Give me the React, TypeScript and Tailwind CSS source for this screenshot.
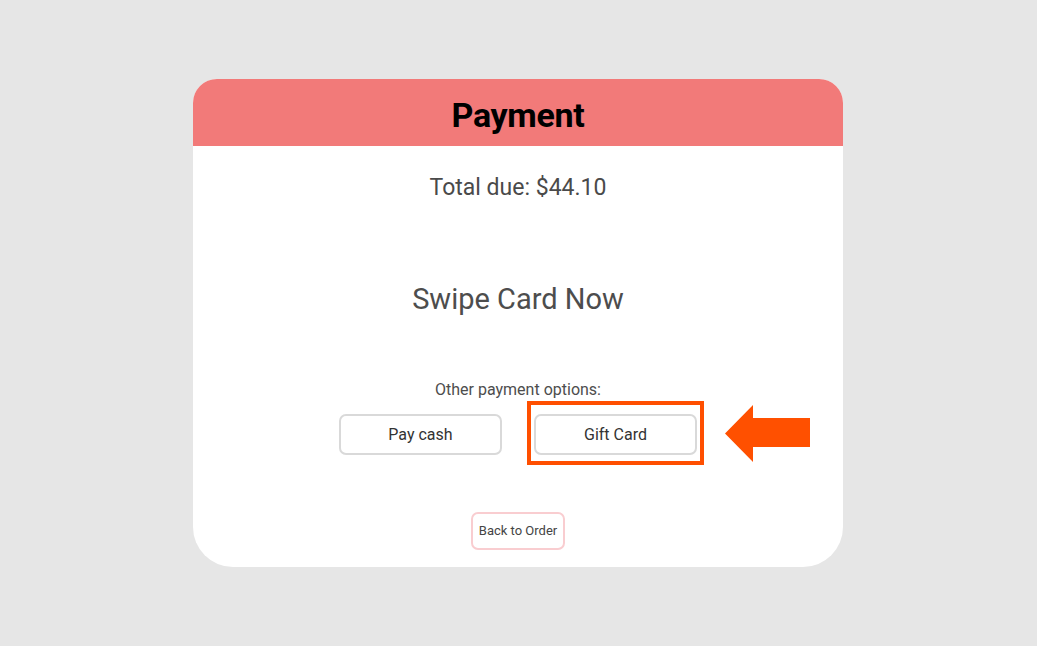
import { useState } from 'react';

const font = { fontFamily: 'Roboto, "Noto Sans", sans-serif' };

export default function App() {
  const [method, setMethod] = useState<'card' | 'cash' | 'gift'>('card');

  return (
    <div
      className="min-h-screen w-full bg-[#e6e6e6] flex items-center justify-center pr-px"
      style={font}
    >
      <div className="w-[650px] h-[488px] bg-white rounded-t-[24px] rounded-b-[40px] overflow-hidden flex flex-col items-center">
        {/* Header */}
        <div className="w-full h-[67px] pt-[5px] bg-[#f27a79] flex items-center justify-center">
          <h1 className="text-[34px] font-bold text-black tracking-[-0.3px]">Payment</h1>
        </div>

        <p className="mt-[27px] text-[23px] leading-[30px] text-[#4a4a4a]">Total due: $44.10</p>

        <p className="mt-[78px] text-[29px] leading-[36px] text-[#4d4d4d]">
          {method === 'card' ? 'Swipe Card Now' : method === 'cash' ? 'Pay with Cash' : 'Scan Gift Card'}
        </p>

        <p className="mt-[62px] text-[16px] leading-[22px] text-[#4d4d4d]">Other payment options:</p>

        {/* Alternative methods */}
        <div className="mt-[13px] flex gap-[32px]">
          <button
            onClick={() => setMethod('cash')}
            className="w-[163px] h-[41px] rounded-[7px] border-2 border-[#d9d9d9] bg-white text-[16px] text-[#333]"
          >
            Pay cash
          </button>
          <div className="relative">
            <button
              onClick={() => setMethod('gift')}
              className="w-[163px] h-[41px] rounded-[7px] border-2 border-[#d9d9d9] bg-white text-[16px] text-[#333]"
            >
              Gift Card
            </button>
            <div className="absolute -left-[7px] -right-[7px] -top-[13px] -bottom-[10px] border-4 border-[#ff4f00] pointer-events-none" />
            <svg
              className="absolute left-[191px] -top-[9px]"
              width="85"
              height="57"
              viewBox="0 0 85 57"
            >
              <polygon points="0,28.5 28,0 28,13 85,13 85,42 28,42 28,57" fill="#ff5000" />
            </svg>
          </div>
        </div>

        <button
          onClick={() => setMethod('card')}
          className="mt-[57px] w-[94px] h-[38px] rounded-[7px] border-2 border-[#f9cdd0] bg-white text-[13px] text-[#444]"
        >
          Back to Order
        </button>
      </div>
    </div>
  );
}
